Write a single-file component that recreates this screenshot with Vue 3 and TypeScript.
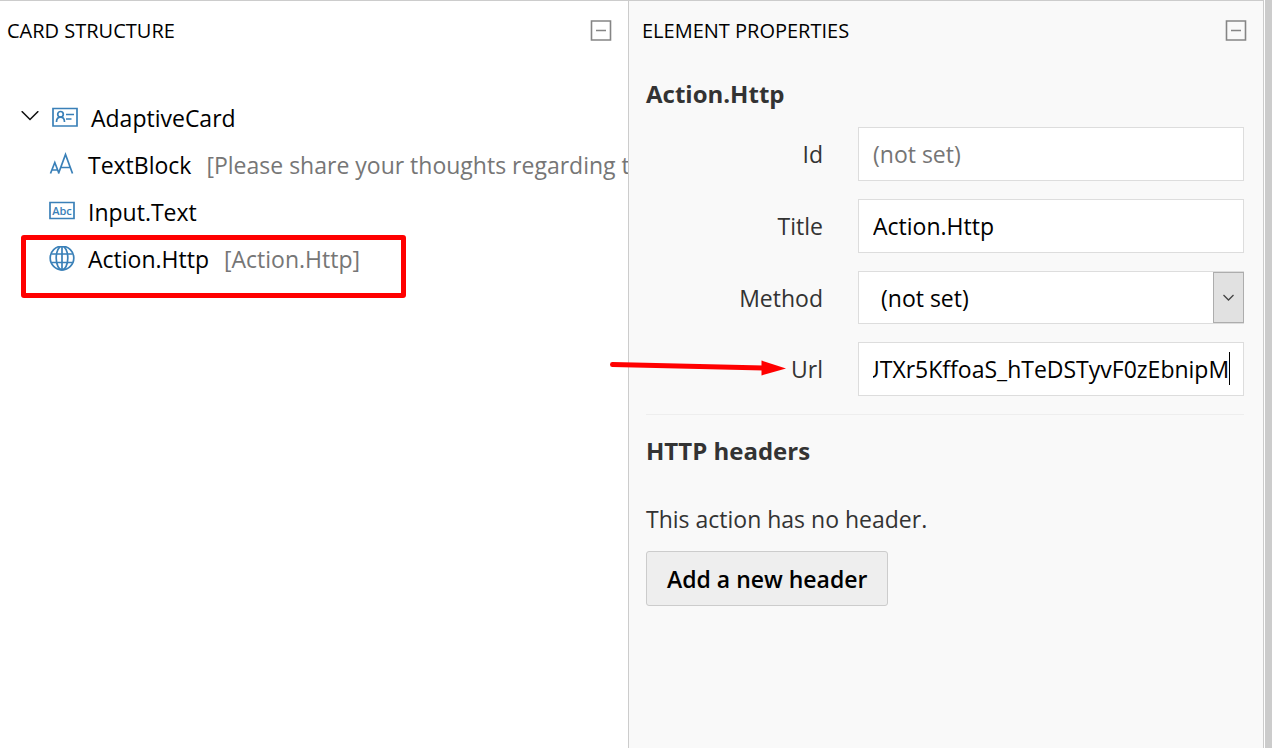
<script setup lang="ts">
import { nextTick, onMounted, ref } from 'vue'

type IconName = 'text' | 'input' | 'globe'

interface TreeItem {
  icon: IconName
  name: string
  hint?: string
  marked?: boolean
}

const items: TreeItem[] = [
  { icon: 'text', name: 'TextBlock', hint: '[Please share your thoughts regarding this' },
  { icon: 'input', name: 'Input.Text' },
  { icon: 'globe', name: 'Action.Http', hint: '[Action.Http]', marked: true },
]

const id = ref('')
const title = ref('Action.Http')
const method = ref('(not set)')
const url = ref('UTXr5KffoaS_hTeDSTyvF0zEbnipM')
const urlInput = ref<HTMLInputElement | null>(null)

onMounted(async () => {
  await nextTick()
  if (urlInput.value) urlInput.value.scrollLeft = urlInput.value.scrollWidth
})
</script>

<template>
  <div class="designer">
    <section class="pane structure">
      <header class="pane-head">
        <h2>CARD STRUCTURE</h2>
        <button type="button" class="collapse" aria-label="Collapse card structure">
          <svg viewBox="0 0 22 22"><path d="M1.5 1h19v19h-19zM6 10.500h10" /></svg>
        </button>
      </header>
      <ul class="tree">
        <li class="node root">
          <svg class="chevron" viewBox="0 0 18 10"><path d="M.7.2 9 8.500 17.3.2" /></svg>
          <svg class="icon" viewBox="0 0 26 26">
            <path d="M1 3.500h24v17.500H1z" />
            <circle cx="8.500" cy="9.300" r="2.800" />
            <path d="M4.500 17c0-3 1.700-4.800 4-4.800s4 1.800 4 4.800M14 9.500h8M14 14h5.500" />
          </svg>
          <span class="name">AdaptiveCard</span>
        </li>
        <li v-for="item in items" :key="item.name" class="node">
          <svg v-if="item.icon === 'text'" class="icon" viewBox="0 0 26 26">
            <path d="M1.500 21.500 5.800 10.500l4.200 11M3 18h5.800M9.500 21.500 16.500 2.500l7 19M12 15.500h9.300" />
          </svg>
          <svg v-else-if="item.icon === 'input'" class="icon" viewBox="0 0 26 26">
            <path d="M1 3.500h24v16H1z" />
            <text x="13" y="15.500" text-anchor="middle">Abc</text>
          </svg>
          <svg v-else class="icon" viewBox="0 0 26 26">
            <circle cx="13" cy="12" r="11.800" />
            <ellipse cx="13" cy="12" rx="5.800" ry="11.800" />
            <path d="M13 0v24M2.500 8h21M2.500 16.500h21" />
          </svg>
          <span class="name">{{ item.name }}</span>
          <span v-if="item.hint" class="hint">{{ item.hint }}</span>
          <span v-if="item.marked" class="marker"></span>
        </li>
      </ul>
    </section>

    <section class="pane properties">
      <header class="pane-head">
        <h2>ELEMENT PROPERTIES</h2>
        <button type="button" class="collapse" aria-label="Collapse element properties">
          <svg viewBox="0 0 22 22"><path d="M1.5 1h19v19h-19zM6 10.500h10" /></svg>
        </button>
      </header>
      <form class="sheet" @submit.prevent>
        <h3>Action.Http</h3>
        <div class="row">
          <label for="f-id">Id</label>
          <input id="f-id" v-model="id" class="field" type="text" placeholder="(not set)" />
        </div>
        <div class="row">
          <label for="f-title">Title</label>
          <input id="f-title" v-model="title" class="field" type="text" />
        </div>
        <div class="row">
          <label for="f-method">Method</label>
          <div class="control">
            <select id="f-method" v-model="method" class="field">
              <option>(not set)</option>
            </select>
            <span class="drop"><svg viewBox="0 0 12 8"><path d="M.5 1 5.500 6l5-5" /></svg></span>
          </div>
        </div>
        <div class="row">
          <label for="f-url">Url</label>
          <div class="control">
            <input id="f-url" ref="urlInput" v-model="url" class="field" type="text" />
            <span class="caret"></span>
          </div>
          <svg class="arrow" viewBox="0 0 176 20">
            <path class="shaft" d="M2.500 7.500 154 11" />
            <path class="tip" d="M151.500 3.500 176 11.500 151.500 18.500z" />
          </svg>
        </div>
        <hr />
        <h3>HTTP headers</h3>
        <p>This action has no header.</p>
        <button type="button" class="add">Add a new header</button>
      </form>
    </section>
    <div class="edge"></div>
  </div>
</template>

<style>
body {
  margin: 0;
  background: #fff;
}
</style>

<style scoped>
.designer {
  display: grid;
  grid-template-columns: minmax(0, 628fr) minmax(0, 636fr) 8px;
  min-height: 100vh;
  box-sizing: border-box;
  font-family: 'Open Sans', 'Noto Sans', sans-serif;
  font-size: 23px;
  line-height: 32px;
  color: #000;
}
.pane {
  border-top: 1px solid #ccc;
  min-width: 0;
}
.structure {
  overflow: hidden;
}
.properties {
  position: relative;
  background: #f9f9f9;
  border-left: 1px solid #ccc;
  border-right: 1px solid #ccc;
}
.edge {
  background: #ccc;
  border-left: 1px solid #fff;
}
.pane-head {
  display: flex;
  align-items: center;
  justify-content: space-between;
  height: 60px;
  padding: 0 16px 0 7px;
}
.properties .pane-head {
  padding-left: 13px;
}
h2 {
  margin: 0;
  font-size: 20px;
  font-weight: 400;
}
.collapse {
  width: 22px;
  height: 22px;
  padding: 0;
  border: 0;
  background: none;
}
.collapse svg {
  display: block;
  width: 22px;
  height: 22px;
  fill: none;
  stroke: #858585;
  stroke-width: 1.6;
}
.tree {
  margin: 0;
  padding: 33px 0 0;
  list-style: none;
}
.node {
  position: relative;
  display: flex;
  align-items: center;
  height: 47px;
  padding-left: 49px;
  white-space: nowrap;
}
.root {
  padding-left: 21px;
}
.chevron {
  flex: none;
  width: 18px;
  height: 10px;
  margin: 0 13px 3px 0;
  fill: none;
  stroke: #111;
  stroke-width: 1.5;
}
.icon {
  flex: none;
  width: 26px;
  height: 26px;
  margin-right: 13px;
  fill: none;
  stroke: #3a80b8;
  stroke-width: 1.7;
}
.icon text {
  fill: #3a80b8;
  stroke: none;
  font-size: 11px;
  font-weight: 600;
}
.hint {
  margin-left: 15px;
  color: #767676;
}
.marker {
  position: absolute;
  left: 21px;
  top: 0;
  box-sizing: border-box;
  width: 385px;
  height: 63px;
  border: 5px solid #f00;
  border-radius: 3px;
}
.sheet {
  padding: 17px 19px 0 17px;
  color: #333;
}
h3 {
  margin: 0 0 17px;
  font-size: 24px;
  font-weight: 700;
}
.row {
  position: relative;
  display: grid;
  grid-template-columns: 177px minmax(0, 1fr);
  column-gap: 35px;
  align-items: center;
  margin-bottom: 18px;
}
label {
  text-align: right;
}
.control {
  position: relative;
}
.field {
  display: block;
  box-sizing: border-box;
  width: 100%;
  height: 54px;
  margin: 0;
  padding: 0 14px;
  border: 1px solid #ddd;
  border-radius: 0;
  outline: 0;
  background: #fff;
  color: #000;
  font: inherit;
  appearance: none;
}
.field::placeholder {
  color: #757575;
  opacity: 1;
}
select.field {
  height: 53px;
  padding-left: 22px;
}
.drop {
  position: absolute;
  top: 1px;
  right: 0;
  bottom: 1px;
  box-sizing: border-box;
  width: 31px;
  display: grid;
  place-items: center;
  border: 1px solid #adadad;
  background: #e1e1e1;
  pointer-events: none;
}
.drop svg {
  width: 12px;
  height: 8px;
  fill: none;
  stroke: #444;
  stroke-width: 1.3;
}
.caret {
  position: absolute;
  top: 10px;
  right: 14px;
  width: 1px;
  height: 33px;
  background: #000;
}
.arrow {
  position: absolute;
  left: -36px;
  top: 15px;
  width: 176px;
  height: 20px;
}
.shaft {
  fill: none;
  stroke: #f00;
  stroke-width: 5;
  stroke-linecap: round;
}
.tip {
  fill: #f00;
}
hr {
  margin: 0 0 20px;
  border: 0;
  border-top: 1px solid #eee;
}
p {
  margin: 36px 0 16px;
}
.add {
  height: 55px;
  padding: 0 20px;
  border: 1px solid #ccc;
  border-radius: 3px;
  background: #eee;
  color: #000;
  font: inherit;
  font-weight: 600;
}
</style>
